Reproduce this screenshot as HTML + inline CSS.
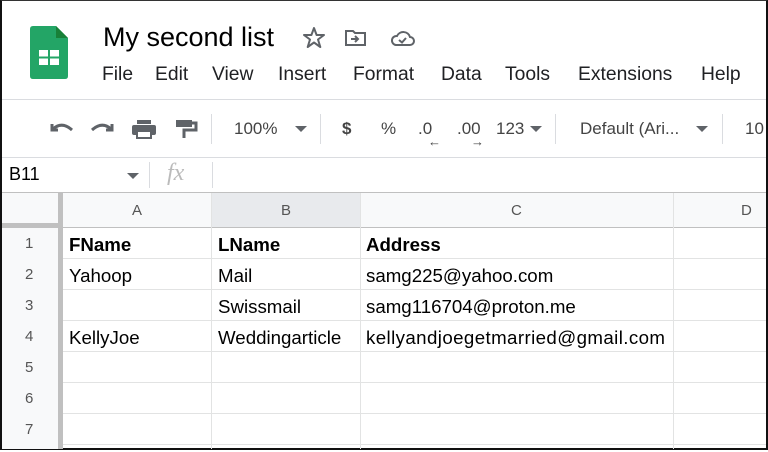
<!DOCTYPE html><html><head><style>
body{margin:0;width:768px;height:452px;overflow:hidden;background:#fff;font-family:"Liberation Sans",Arial,sans-serif;position:relative}
.a{position:absolute;white-space:nowrap}
.m{font-size:19.3px;color:#202124;top:64px}
.t{font-size:17px;color:#444;top:119px}
.c{font-size:18.7px;color:#000}
.h{font-size:15px;color:#555}
</style></head><body>
<div class="a" style="left:0;top:0;width:764px;height:447px;border:2px solid #111;border-top:1px solid #333"></div>
<svg class="a" style="left:30px;top:26px" width="40" height="54"><path d="M3 0H26L38 12V50Q38 53 35 53H3Q0 53 0 50V3Q0 0 3 0Z" fill="#23a566"/><path d="M26 0L38 12H26Z" fill="#188038"/><rect x="9" y="24" width="20" height="15" fill="#fff"/><rect x="18" y="24" width="2" height="15" fill="#23a566"/><rect x="9" y="30.5" width="20" height="2" fill="#23a566"/></svg>
<div class="a" style="left:103px;top:22px;font-size:27px;color:#000">My second list</div>
<svg class="a" style="left:302px;top:26px" width="24" height="22"><path d="M12 2L14.6 9H22L16 13.5L18.3 21L12 16.5L5.7 21L8 13.5L2 9H9.4Z" fill="none" stroke="#5f6368" stroke-width="2" stroke-linejoin="round"/></svg>
<svg class="a" style="left:344px;top:28px" width="24" height="20"><path d="M2 3H9L11 5H21V17H2Z" fill="none" stroke="#5f6368" stroke-width="2"/><path d="M7 11H14M11 8L14 11L11 14" fill="none" stroke="#5f6368" stroke-width="2"/></svg>
<svg class="a" style="left:390px;top:28px" width="26" height="20"><path d="M6 17H20A4 4 0 0 0 20 9A7 7 0 0 0 7 8A4.5 4.5 0 0 0 6 17Z" fill="none" stroke="#5f6368" stroke-width="2"/><path d="M9 12L12 14.5L16 10" fill="none" stroke="#5f6368" stroke-width="2"/></svg>
<div class="a m" style="left:102px">File</div><div class="a m" style="left:155px">Edit</div><div class="a m" style="left:212px">View</div><div class="a m" style="left:278px">Insert</div><div class="a m" style="left:353px">Format</div><div class="a m" style="left:441px">Data</div><div class="a m" style="left:505px">Tools</div><div class="a m" style="left:578px">Extensions</div><div class="a m" style="left:701px">Help</div>
<div class="a" style="left:2px;top:99px;width:764px;height:1px;background:#dadce0"></div>
<svg class="a" style="left:48px;top:118px" width="160" height="22"><path d="M4 6V12H10" fill="none" stroke="#5f6368" stroke-width="3"/><path d="M5 11Q14 3 24 12" fill="none" stroke="#5f6368" stroke-width="3"/><path d="M64 6V12H58" fill="none" stroke="#5f6368" stroke-width="3"/><path d="M63 11Q54 3 44 12" fill="none" stroke="#5f6368" stroke-width="3"/><rect x="89" y="2" width="14" height="4" fill="#5f6368"/><rect x="84" y="7" width="24" height="10" rx="2" fill="#5f6368"/><rect x="89" y="13" width="14" height="7" fill="#fff" stroke="#5f6368" stroke-width="2"/><rect x="128" y="2" width="16" height="7" fill="#5f6368"/><path d="M144 5H148V12H136V20" fill="none" stroke="#5f6368" stroke-width="3"/></svg>
<div class="a" style="left:211px;top:114px;width:1px;height:30px;background:#dadce0"></div>
<div class="a t" style="left:234px">100%</div>
<svg class="a" style="left:295px;top:126px" width="12" height="8"><path d="M0 0H12L6 6Z" fill="#5f6368"/></svg>
<div class="a" style="left:320px;top:114px;width:1px;height:30px;background:#dadce0"></div>
<div class="a t" style="left:342px;font-weight:bold">$</div>
<div class="a t" style="left:381px">%</div>
<div class="a t" style="left:418px">.0</div><div class="a" style="left:428px;top:134px;font-size:13px;color:#444">←</div>
<div class="a t" style="left:457px">.00</div><div class="a" style="left:471px;top:134px;font-size:13px;color:#444">→</div>
<div class="a t" style="left:496px">123</div>
<svg class="a" style="left:530px;top:126px" width="12" height="8"><path d="M0 0H12L6 6Z" fill="#5f6368"/></svg>
<div class="a" style="left:555px;top:114px;width:1px;height:30px;background:#dadce0"></div>
<div class="a t" style="left:580px">Default (Ari...</div>
<svg class="a" style="left:696px;top:126px" width="12" height="8"><path d="M0 0H12L6 6Z" fill="#5f6368"/></svg>
<div class="a" style="left:722px;top:114px;width:1px;height:30px;background:#dadce0"></div>
<div class="a t" style="left:745px">10</div>
<div class="a" style="left:2px;top:157px;width:764px;height:1px;background:#dadce0"></div>
<div class="a" style="left:9px;top:164px;font-size:18px;color:#000">B11</div>
<svg class="a" style="left:127px;top:173px" width="12" height="8"><path d="M0 0H12L6 6Z" fill="#5f6368"/></svg>
<div class="a" style="left:149px;top:162px;width:1px;height:26px;background:#dadce0"></div>
<div class="a" style="left:167px;top:160px;font-size:24px;color:#bbb;font-family:'Liberation Serif',serif;font-style:italic">fx</div>
<div class="a" style="left:212px;top:162px;width:1px;height:26px;background:#dadce0"></div>
<div class="a" style="left:2px;top:192px;width:764px;height:1px;background:#c0c0c0"></div>
<div class="a" style="left:2px;top:193px;width:764px;height:35px;background:#f8f9fa"></div>
<div class="a" style="left:211px;top:193px;width:149px;height:35px;background:#e8eaed"></div>
<div class="a" style="left:58px;top:193px;width:5px;height:256px;background:#c0c0c0"></div>
<div class="a" style="left:2px;top:223px;width:61px;height:5px;background:#c0c0c0"></div>
<div class="a" style="left:2px;top:228px;width:56px;height:221px;background:#f8f9fa"></div>
<div class="a" style="left:2px;top:227px;width:764px;height:1px;background:#c0c0c0"></div>
<div class="a" style="left:211px;top:193px;width:1px;height:256px;background:#e2e3e3"></div>
<div class="a" style="left:360px;top:193px;width:1px;height:256px;background:#e2e3e3"></div>
<div class="a" style="left:673px;top:193px;width:1px;height:256px;background:#e2e3e3"></div>
<div class="a" style="left:63px;top:258px;width:703px;height:1px;background:#e2e3e3"></div>
<div class="a" style="left:63px;top:289px;width:703px;height:1px;background:#e2e3e3"></div>
<div class="a" style="left:63px;top:320px;width:703px;height:1px;background:#e2e3e3"></div>
<div class="a" style="left:63px;top:351px;width:703px;height:1px;background:#e2e3e3"></div>
<div class="a" style="left:63px;top:382px;width:703px;height:1px;background:#e2e3e3"></div>
<div class="a" style="left:63px;top:413px;width:703px;height:1px;background:#e2e3e3"></div>
<div class="a" style="left:63px;top:444px;width:703px;height:1px;background:#e2e3e3"></div>
<div class="a h" style="left:132px;top:202px">A</div><div class="a h" style="left:281px;top:202px">B</div><div class="a h" style="left:511px;top:202px">C</div><div class="a h" style="left:741px;top:202px">D</div>
<div class="a h" style="left:25px;top:235px">1</div><div class="a h" style="left:25px;top:266px">2</div><div class="a h" style="left:25px;top:297px">3</div><div class="a h" style="left:25px;top:328px">4</div><div class="a h" style="left:25px;top:359px">5</div><div class="a h" style="left:25px;top:390px">6</div><div class="a h" style="left:25px;top:421px">7</div>
<div class="a c" style="left:69px;top:234px;font-weight:bold">FName</div><div class="a c" style="left:218px;top:234px;font-weight:bold">LName</div><div class="a c" style="left:366px;top:234px;font-weight:bold">Address</div>
<div class="a c" style="left:69px;top:265px">Yahoop</div><div class="a c" style="left:218px;top:265px">Mail</div><div class="a c" style="left:366px;top:265px">samg225@yahoo.com</div>
<div class="a c" style="left:218px;top:296px">Swissmail</div><div class="a c" style="left:366px;top:296px">samg116704@proton.me</div>
<div class="a c" style="left:69px;top:327px">KellyJoe</div><div class="a c" style="left:218px;top:327px">Weddingarticle</div><div class="a c" style="left:366px;top:327px;letter-spacing:0.4px">kellyandjoegetmarried@gmail.com</div>
</body></html>
